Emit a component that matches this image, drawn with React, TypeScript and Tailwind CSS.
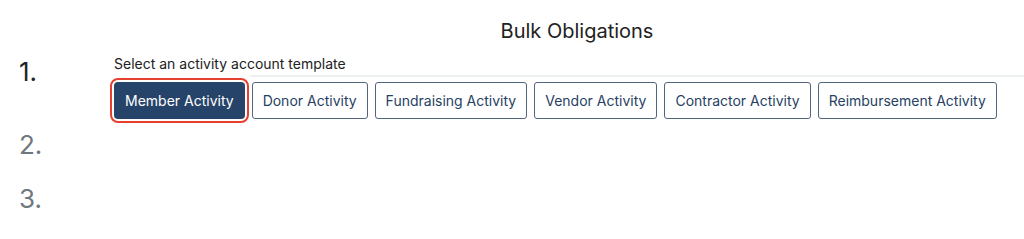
import React from 'react';

const templates = [
  'Member Activity',
  'Donor Activity',
  'Fundraising Activity',
  'Vendor Activity',
  'Contractor Activity',
  'Reimbursement Activity',
];

export default function App() {
  return (
    <div className="relative h-[239px] w-[1024px] overflow-hidden bg-white font-['Inter','Liberation_Sans',sans-serif]">
      <h1 className="pl-[130px] pt-[17px] text-center text-[20px] leading-[28px] text-[#222]">
        Bulk Obligations
      </h1>

      <div className="mt-[9px] flex">
        {/* step numbers */}
        <div className="flex w-[114px] shrink-0 flex-col pl-[19px]">
          <span className="mt-[2px] text-[26px] leading-[32px] text-[#222]">1.</span>
          <span className="mt-[41px] text-[26px] leading-[32px] text-[#6f777f]">2.</span>
          <span className="mt-[22px] text-[26px] leading-[32px] text-[#6f777f]">3.</span>
        </div>

        <div className="flex-1">
          <p className="text-[14px] leading-[20px] text-[#222]">Select an activity account template</p>
          <div className="relative">
            <div className="ml-[136px] mt-[1px] h-[2px] bg-[#eef1f1]" />
            <div className="mt-[5px] flex gap-[7px]">
              {templates.map((t, i) =>
                i === 0 ? (
                  <button
                    key={t}
                    className="h-[37px] rounded-[4px] bg-[#26446a] px-[11px] text-[14px] text-white outline outline-2 outline-offset-2 outline-[#e8402f]"
                  >
                    {t}
                  </button>
                ) : (
                  <button
                    key={t}
                    className="h-[37px] rounded-[3px] border border-[#51657f] bg-white px-[10px] text-[14px] text-[#273f63]"
                  >
                    {t}
                  </button>
                )
              )}
            </div>
          </div>
        </div>
      </div>
    </div>
  );
}
